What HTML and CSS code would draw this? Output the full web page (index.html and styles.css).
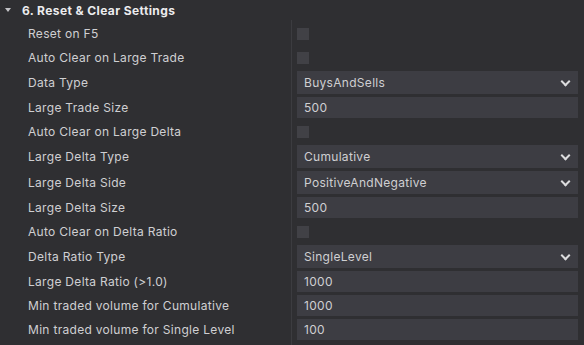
FILE: index.html
```html
<!DOCTYPE html>
<html lang="en">
<head>
  <meta charset="UTF-8">
  <title>Reset &amp; Clear Settings</title>
  <link rel="stylesheet" href="styles.css">
</head>
<body>
  <div class="group-header">
    <span class="caret"></span>
    <span>6. Reset &amp; Clear Settings</span>
  </div>

  <div class="settings">
    <div class="label">Reset on F5</div>
    <div class="cell row-check"><span class="checkbox"></span></div>

    <div class="label">Auto Clear on Large Trade</div>
    <div class="cell row-check"><span class="checkbox"></span></div>

    <div class="label">Data Type</div>
    <div class="cell row-select"><div class="select">BuysAndSells<span class="chevron"></span></div></div>

    <div class="label">Large Trade Size</div>
    <div class="cell row-input"><div class="input">500</div></div>

    <div class="label">Auto Clear on Large Delta</div>
    <div class="cell row-check"><span class="checkbox"></span></div>

    <div class="label">Large Delta Type</div>
    <div class="cell row-select"><div class="select">Cumulative<span class="chevron"></span></div></div>

    <div class="label">Large Delta Side</div>
    <div class="cell row-select"><div class="select">PositiveAndNegative<span class="chevron"></span></div></div>

    <div class="label">Large Delta Size</div>
    <div class="cell row-input"><div class="input">500</div></div>

    <div class="label">Auto Clear on Delta Ratio</div>
    <div class="cell row-check"><span class="checkbox"></span></div>

    <div class="label">Delta Ratio Type</div>
    <div class="cell row-select"><div class="select">SingleLevel<span class="chevron"></span></div></div>

    <div class="label">Large Delta Ratio (&gt;1.0)</div>
    <div class="cell row-input"><div class="input">1000</div></div>

    <div class="label">Min traded volume for Cumulative</div>
    <div class="cell row-input"><div class="input">1000</div></div>

    <div class="label last">Min traded volume for Single Level</div>
    <div class="cell row-input last"><div class="input">100</div></div>
  </div>
</body>
</html>
```

FILE: styles.css
```css
body {
  margin: 0;
  width: 584px;
  height: 345px;
  overflow: hidden;
  background-color: #2f2f32;
  color: #cfcfd2;
  font-family: 'Inter', 'Open Sans', sans-serif;
  font-size: 12px;
  letter-spacing: 0.3px;
}

.group-header {
  display: flex;
  align-items: center;
  height: 20px;
  padding-left: 5px;
  color: #ececee;
  font-weight: bold;
  letter-spacing: 0.4px;
}

.caret {
  width: 0;
  height: 0;
  margin-right: 11px;
  border-left: 3px solid transparent;
  border-right: 3px solid transparent;
  border-top: 4px solid #c4c4c8;
}

/* Two column property grid */
.settings {
  display: grid;
  grid-template-columns: 291px 1fr;
}

.label {
  display: flex;
  align-items: center;
  padding: 3px 0 0 28px;
  white-space: nowrap;
}

.cell {
  display: flex;
  align-items: center;
  padding: 3px 6px 0 5px;
  border-left: 1px solid #3c3c40;
}

.row-check {
  height: 21px;
}

.row-select {
  height: 23px;
}

.row-input {
  height: 21px;
}

.label.last,
.cell.last {
  padding-bottom: 5px;
}

.cell.last {
  align-items: flex-start;
}

.label.last {
  align-items: flex-start;
  line-height: 21px;
}

.checkbox {
  width: 12px;
  height: 12px;
  background-color: #414146;
}

.select,
.input {
  display: flex;
  align-items: center;
  justify-content: space-between;
  box-sizing: border-box;
  width: 100%;
  height: 100%;
  padding: 0 6px 0 7px;
  background-color: #3d3d43;
}

.chevron {
  width: 5px;
  height: 5px;
  margin: 0 3px 3px 0;
  border-right: 2px solid #dcdcde;
  border-bottom: 2px solid #dcdcde;
  transform: rotate(45deg);
}
```
